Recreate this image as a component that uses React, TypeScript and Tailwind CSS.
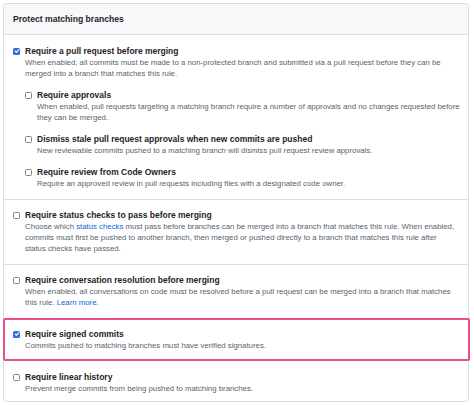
import React from "react";

function Box({ checked }: { checked?: boolean }) {
  if (checked) {
    return (
      <span className="mt-[2.5px] flex h-[7px] w-[7px] shrink-0 items-center justify-center rounded-[1.5px] bg-[#2f6fe0]">
        <svg viewBox="0 0 10 10" className="h-[6px] w-[6px]">
          <path d="M2 5.2 L4.1 7.3 L8 2.8" fill="none" stroke="#fff" strokeWidth="1.8" strokeLinecap="round" strokeLinejoin="round" />
        </svg>
      </span>
    );
  }
  return <span className="mt-[2.5px] h-[7px] w-[7px] shrink-0 rounded-[1.5px] border border-[#7d858f] bg-white" />;
}

function Item({
  title,
  checked,
  children,
  sub,
}: {
  title: string;
  checked?: boolean;
  children: React.ReactNode;
  sub?: React.ReactNode;
}) {
  return (
    <div className="flex gap-[5px]">
      <Box checked={checked} />
      <div className="min-w-0 flex-1">
        <div className="whitespace-nowrap text-[8.5px] font-bold leading-[12px] text-[#1f2328]">{title}</div>
        <div className="whitespace-nowrap text-[7.8px] leading-[11px] text-[#59636e]">{children}</div>
        {sub}
      </div>
    </div>
  );
}

export default function App() {
  return (
    <div className="min-h-[405px] bg-white pl-[3px] pt-[3px]" style={{ fontFamily: '"Liberation Sans", Arial, sans-serif' }}>
      <div className="w-[466px] rounded-[4px] border border-[#d8dee4]">
        <div className="flex h-[31px] items-center rounded-t-[4px] border-b border-[#d8dee4] bg-[#f6f8fa] pl-[9px] text-[8.6px] font-bold text-[#1f2328]">
          Protect matching branches
        </div>

        <div className="border-b border-[#d8dee4] py-[10px] pl-[9px] pr-[3px]">
          <Item
            checked
            title="Require a pull request before merging"
            sub={
              <div className="flex flex-col gap-[10px] pt-[10px]">
                <Item title="Require approvals">
                  When enabled, pull requests targeting a matching branch require a number of approvals and no changes requested before
                  <br />
                  they can be merged.
                </Item>
                <Item title="Dismiss stale pull request approvals when new commits are pushed">
                  New reviewable commits pushed to a matching branch will dismiss pull request review approvals.
                </Item>
                <Item title="Require review from Code Owners">
                  Require an approved review in pull requests including files with a designated code owner.
                </Item>
              </div>
            }
          >
            When enabled, all commits must be made to a non-protected branch and submitted via a pull request before they can be
            <br />
            merged into a branch that matches this rule.
          </Item>
        </div>

        <div className="border-b border-[#d8dee4] pb-[10px] pl-[9px] pr-[3px] pt-[9px]">
          <Item title="Require status checks to pass before merging">
            Choose which <span className="text-[#0969da]">status checks</span> must pass before branches can be merged into a branch that matches this rule. When enabled,
            <br />
            commits must first be pushed to another branch, then merged or pushed directly to a branch that matches this rule after
            <br />
            status checks have passed.
          </Item>
        </div>

        <div className="pb-[10px] pl-[9px] pr-[3px] pt-[9px]">
          <Item title="Require conversation resolution before merging">
            When enabled, all conversations on code must be resolved before a pull request can be merged into a branch that matches
            <br />
            this rule. <span className="text-[#0969da]">Learn more.</span>
          </Item>
        </div>

        <div className="relative py-[10px] pl-[9px] pr-[3px]">
          <div className="pointer-events-none absolute -left-[1px] -right-[2px] bottom-0 top-0 rounded-[2px] border-2 border-[#e8508c]" />
          <Item checked title="Require signed commits">
            Commits pushed to matching branches must have verified signatures.
          </Item>
        </div>

        <div className="pb-[7px] pl-[9px] pr-[3px] pt-[10px]">
          <Item title="Require linear history">
            Prevent merge commits from being pushed to matching branches.
          </Item>
        </div>
      </div>
    </div>
  );
}
